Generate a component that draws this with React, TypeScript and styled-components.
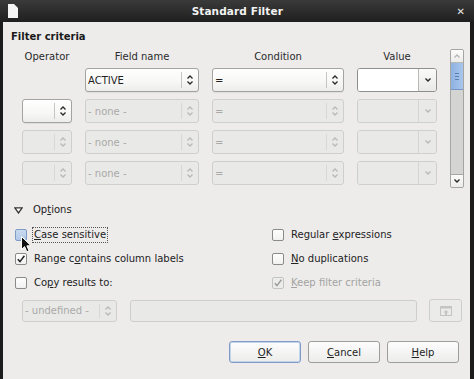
import styled, {createGlobalStyle, css} from 'styled-components'

const GlobalStyle = createGlobalStyle`
  html, body {
    margin: 0;
    padding: 0;
    background: #1c1c1c;
  }
  body {
    font-family: 'DejaVu Sans', 'Liberation Sans', sans-serif;
    font-size: 10px;
    color: #222;
  }
`

interface RowData {
  operator: boolean
  field: string
  enabled: boolean
}

const rows: RowData[] = [
  {operator: false, field: 'ACTIVE', enabled: true},
  {operator: true, field: '- none -', enabled: true},
  {operator: true, field: '- none -', enabled: false},
  {operator: true, field: '- none -', enabled: false},
]

function SpinArrows({disabled}: {disabled?: boolean}) {
  return (
    <svg width='8' height='12' viewBox='0 0 8 12'>
      <path
        d='M1.5 4.5 L4 2 L6.5 4.5 M1.5 7.5 L4 10 L6.5 7.5'
        fill='none'
        stroke={disabled ? '#b9b9b7' : '#2a2a2a'}
        strokeWidth='1.3'
      />
    </svg>
  )
}

function DropArrow({disabled, color}: {disabled?: boolean; color?: string}) {
  return (
    <svg width='8' height='6' viewBox='0 0 8 6'>
      <path
        d='M1.5 1.5 L4 4 L6.5 1.5'
        fill='none'
        stroke={color ?? (disabled ? '#b9b9b7' : '#2a2a2a')}
        strokeWidth='1.4'
      />
    </svg>
  )
}

function Check({disabled}: {disabled?: boolean}) {
  return (
    <svg width='10' height='10' viewBox='0 0 10 10'>
      <path
        d='M1.8 5.2 L4 7.6 L8.4 1.8'
        fill='none'
        stroke={disabled ? '#9d9d9b' : '#222'}
        strokeWidth='1.5'
      />
    </svg>
  )
}

function SpinBox({
  text,
  disabled,
  width,
}: {
  text: string
  disabled?: boolean
  width?: number
}) {
  return (
    <Spin $disabled={disabled} $width={width}>
      <SpinText $disabled={disabled}>{text}</SpinText>
      <SpinButton $disabled={disabled}>
        <SpinArrows disabled={disabled} />
      </SpinButton>
    </Spin>
  )
}

function CheckItem({
  label,
  checked,
  disabled,
  hover,
  focus,
}: {
  label: React.ReactNode
  checked?: boolean
  disabled?: boolean
  hover?: boolean
  focus?: boolean
}) {
  return (
    <CheckRow>
      <Box $hover={hover} $disabled={disabled}>
        {checked && <Check disabled={disabled} />}
      </Box>
      <CheckLabel $disabled={disabled} $focus={focus}>
        {label}
      </CheckLabel>
    </CheckRow>
  )
}

function App() {
  return (
    <>
      <GlobalStyle />
      <Window>
        <TitleBar>
          <DocIcon width='10' height='14' viewBox='0 0 10 14'>
            <path d='M0 0 H6 L10 4 V14 H0 Z' fill='#f4f4f4' />
          </DocIcon>
          <Title>Standard Filter</Title>
          <Close>✕</Close>
        </TitleBar>
        <Body>
          <SectionTitle>Filter criteria</SectionTitle>
          <CriteriaGrid>
            <ColHead>Operator</ColHead>
            <ColHead>Field name</ColHead>
            <ColHead>Condition</ColHead>
            <ColHead>Value</ColHead>
            <Scrollbar>
              <ScrollButton>
                <svg width='8' height='6' viewBox='0 0 8 6'>
                  <path
                    d='M1.5 4.5 L4 2 L6.5 4.5'
                    fill='none'
                    stroke='#b5b5b3'
                    strokeWidth='1.3'
                  />
                </svg>
              </ScrollButton>
              <Thumb>
                <Grip />
                <Grip />
                <Grip />
              </Thumb>
              <Track />
              <ScrollButton>
                <DropArrow />
              </ScrollButton>
            </Scrollbar>
            {rows.map((row, i) => (
              <Row key={i}>
                {row.operator ? (
                  <SpinBox text='' disabled={!row.enabled} />
                ) : (
                  <span />
                )}
                <SpinBox text={row.field} disabled={i > 0} />
                <SpinBox text='=' disabled={i > 0} />
                <Combo $disabled={i > 0}>
                  <ComboText $disabled={i > 0} />
                  <ComboButton $disabled={i > 0}>
                    <DropArrow disabled={i > 0} />
                  </ComboButton>
                </Combo>
              </Row>
            ))}
          </CriteriaGrid>

          <OptionsToggle>
            <svg width='9' height='7' viewBox='0 0 9 7'>
              <path d='M0.8 0.8 H8.2 L4.5 6 Z' fill='#fff' stroke='#333' strokeWidth='1.3' />
            </svg>
            <span>
              Op<u>t</u>ions
            </span>
          </OptionsToggle>

          <OptionsGrid>
            <CheckItem
              label={
                <>
                  <u>C</u>ase sensitive
                </>
              }
              hover
              focus
            />
            <CheckItem
              label={
                <>
                  Regular <u>e</u>xpressions
                </>
              }
            />
            <CheckItem
              label={
                <>
                  Range c<u>o</u>ntains column labels
                </>
              }
              checked
            />
            <CheckItem
              label={
                <>
                  <u>N</u>o duplications
                </>
              }
            />
            <CheckItem
              label={
                <>
                  Co<u>p</u>y results to:
                </>
              }
            />
            <CheckItem
              label={
                <>
                  <u>K</u>eep filter criteria
                </>
              }
              checked
              disabled
            />
            <Cursor width='11' height='17' viewBox='0 0 11 17'>
              <path
                d='M0.5 0.5 V13.5 L3.6 10.6 L5.8 15.8 L8 14.8 L5.9 9.8 H10 Z'
                fill='#111'
                stroke='#fff'
                strokeWidth='1'
              />
            </Cursor>
          </OptionsGrid>

          <CopyRow>
            <SpinBox text='- undefined -' disabled width={95} />
            <TextField />
            <ShrinkButton>
              <svg width='12' height='10' viewBox='0 0 12 10'>
                <rect x='0.5' y='0.5' width='11' height='9' fill='none' stroke='#c4c4c2' />
                <rect x='0.5' y='0.5' width='11' height='2' fill='#c4c4c2' />
                <path d='M6 4 L8.5 6.5 H7 V9 H5 V6.5 H3.5 Z' fill='#c4c4c2' />
              </svg>
            </ShrinkButton>
          </CopyRow>

          <ButtonRow>
            <PushButton $default>
              <u>O</u>K
            </PushButton>
            <PushButton>
              <u>C</u>ancel
            </PushButton>
            <PushButton>
              <u>H</u>elp
            </PushButton>
          </ButtonRow>
        </Body>
      </Window>
    </>
  )
}

const Window = styled.div`
  width: 474px;
  height: 379px;
  display: flex;
  flex-direction: column;
  background: #1c1c1c;
  overflow: hidden;
`

const TitleBar = styled.div`
  height: 22px;
  flex: none;
  display: flex;
  align-items: center;
  padding: 0 9px 0 8px;
  background: linear-gradient(#3a3a3a, #1f1f1f);
  color: #f2f2f2;
`

const DocIcon = styled.svg`
  flex: none;
`

const Title = styled.div`
  flex: 1;
  text-align: center;
  font-weight: bold;
  font-size: 10.5px;
  letter-spacing: 0.1px;
`

const Close = styled.div`
  font-size: 10px;
  font-weight: bold;
  color: #e8e8e8;
`

const Body = styled.div`
  flex: 1;
  margin: 0 4px 0 3px;
  padding: 9px 8px 0 8px;
  background: #edeceb;
  display: flex;
  flex-direction: column;
`

const SectionTitle = styled.div`
  font-weight: bold;
  line-height: 12px;
  color: #1a1a1a;
`

const CriteriaGrid = styled.div`
  margin: 6px 0 0 11px;
  display: grid;
  grid-template-columns: 50px 114px 132px 80px 14px;
  grid-template-rows: 12px repeat(4, 24px);
  column-gap: 13px;
  row-gap: 7px;
`

const ColHead = styled.div`
  text-align: center;
  line-height: 14px;
  margin-top: 1px;
  color: #2a2a2a;
`

const Row = styled.div`
  display: contents;
`

const fieldBorder = css<{$disabled?: boolean}>`
  border: 1px solid ${p => (p.$disabled ? '#cfcfcd' : '#a3a3a1')};
  border-radius: 3px;
  box-sizing: border-box;
`

const Spin = styled.div<{$disabled?: boolean; $width?: number}>`
  ${fieldBorder};
  display: flex;
  align-items: stretch;
  height: ${p => (p.$width ? '22px' : '24px')};
  ${p => p.$width && `width: ${p.$width}px;`}
  background: ${p =>
    p.$disabled ? '#e9e9e7' : 'linear-gradient(#ffffff, #f7f7f6 60%, #ececeb)'};
  box-shadow: ${p => (p.$disabled ? 'none' : '0 1px 0 rgba(0,0,0,0.06)')};
`

const SpinText = styled.div<{$disabled?: boolean}>`
  flex: 1;
  display: flex;
  align-items: center;
  padding-left: 2px;
  color: ${p => (p.$disabled ? '#a9a9a7' : '#1e1e1e')};
  white-space: nowrap;
  overflow: hidden;
`

const SpinButton = styled.div<{$disabled?: boolean}>`
  width: 16px;
  display: flex;
  align-items: center;
  justify-content: center;
  margin: 3px 0;
  border-left: 1px solid ${p => (p.$disabled ? '#d7d7d5' : '#c6c6c4')};
`

const Combo = styled.div<{$disabled?: boolean}>`
  ${fieldBorder};
  display: flex;
  height: 24px;
  border-color: ${p => (p.$disabled ? '#cfcfcd' : '#8f8f8d')};
  background: ${p => (p.$disabled ? '#e9e9e7' : '#fff')};
  overflow: hidden;
`

const ComboText = styled.div<{$disabled?: boolean}>`
  flex: 1;
  background: ${p => (p.$disabled ? '#e9e9e7' : '#fff')};
`

const ComboButton = styled.div<{$disabled?: boolean}>`
  width: 17px;
  display: flex;
  align-items: center;
  justify-content: center;
  border-left: 1px solid ${p => (p.$disabled ? '#d5d5d3' : '#b9b9b7')};
  background: ${p =>
    p.$disabled ? '#e9e9e7' : 'linear-gradient(#fafaf9, #e9e9e8)'};
`

const Scrollbar = styled.div`
  grid-column: 5;
  grid-row: 1 / -1;
  margin-bottom: -3px;
  display: flex;
  flex-direction: column;
  border: 1px solid #a5a5a3;
  border-radius: 2px;
  background: #d4d4d2;
  box-sizing: border-box;
  overflow: hidden;
`

const ScrollButton = styled.div`
  height: 12px;
  flex: none;
  display: flex;
  align-items: center;
  justify-content: center;
  background: linear-gradient(#fcfcfc, #ececea);
  &:first-child {
    border-bottom: 1px solid #b8b8b6;
  }
  &:last-child {
    border-top: 1px solid #a5a5a3;
  }
`

const Thumb = styled.div`
  height: 26px;
  flex: none;
  display: flex;
  flex-direction: column;
  align-items: center;
  justify-content: center;
  gap: 2px;
  background: linear-gradient(90deg, #8db2e2, #a9c6ec);
  border-bottom: 1px solid #7799c8;
`

const Grip = styled.div`
  width: 4px;
  height: 1px;
  background: #5a7fb3;
`

const Track = styled.div`
  flex: 1;
`

const OptionsToggle = styled.div`
  margin: 19px 0 0 3px;
  display: flex;
  align-items: center;
  gap: 10px;
  line-height: 12px;
  color: #222;
`

const OptionsGrid = styled.div`
  position: relative;
  margin: 7px 0 0 4px;
  display: grid;
  grid-template-columns: 257px 1fr;
  grid-auto-rows: 24px;
`

const CheckRow = styled.div`
  display: flex;
  align-items: center;
  gap: 6px;
`

const Box = styled.div<{$hover?: boolean; $disabled?: boolean}>`
  width: 12px;
  height: 12px;
  box-sizing: border-box;
  flex: none;
  display: flex;
  align-items: center;
  justify-content: center;
  border-radius: 2px;
  border: 1px solid
    ${p => (p.$hover ? '#7f9cc6' : p.$disabled ? '#c4c4c2' : '#8a8a88')};
  background: ${p =>
    p.$hover
      ? 'linear-gradient(#c9daf0, #b3c9e8)'
      : p.$disabled
        ? '#ececea'
        : 'linear-gradient(#ffffff, #f1f1f0)'};
`

const CheckLabel = styled.span<{$disabled?: boolean; $focus?: boolean}>`
  color: ${p => (p.$disabled ? '#a3a3a1' : '#222')};
  line-height: 12px;
  padding: 1px 1px;
  margin-left: -1px;
  border: 1px dotted ${p => (p.$focus ? '#555' : 'transparent')};
  white-space: nowrap;
`

const Cursor = styled.svg`
  position: absolute;
  left: 6px;
  top: 13px;
`

const CopyRow = styled.div`
  margin: 4px 0 0 11px;
  display: flex;
  align-items: center;
  gap: 13px;
`

const TextField = styled.div`
  width: 287px;
  height: 22px;
  box-sizing: border-box;
  border: 1px solid #cdcdcb;
  border-radius: 3px;
  background: #e9e9e7;
`

const ShrinkButton = styled.div`
  width: 33px;
  height: 23px;
  margin-left: -1px;
  box-sizing: border-box;
  display: flex;
  align-items: center;
  justify-content: center;
  border: 1px solid #cdcdcb;
  border-radius: 3px;
  background: #ebebe9;
`

const ButtonRow = styled.div`
  margin: 19px 3px 0 0;
  display: flex;
  justify-content: flex-end;
  gap: 7px;
`

const PushButton = styled.div<{$default?: boolean}>`
  width: 72px;
  height: 22px;
  box-sizing: border-box;
  display: flex;
  align-items: center;
  justify-content: center;
  border: 1px solid ${p => (p.$default ? '#7f9bc4' : '#9d9d9b')};
  border-radius: 3px;
  background: linear-gradient(#fdfdfd, #ececeb);
  box-shadow: ${p => (p.$default ? 'inset 0 0 0 1px #c4d4ea' : 'none')};
  color: #1e1e1e;
`

export default App
